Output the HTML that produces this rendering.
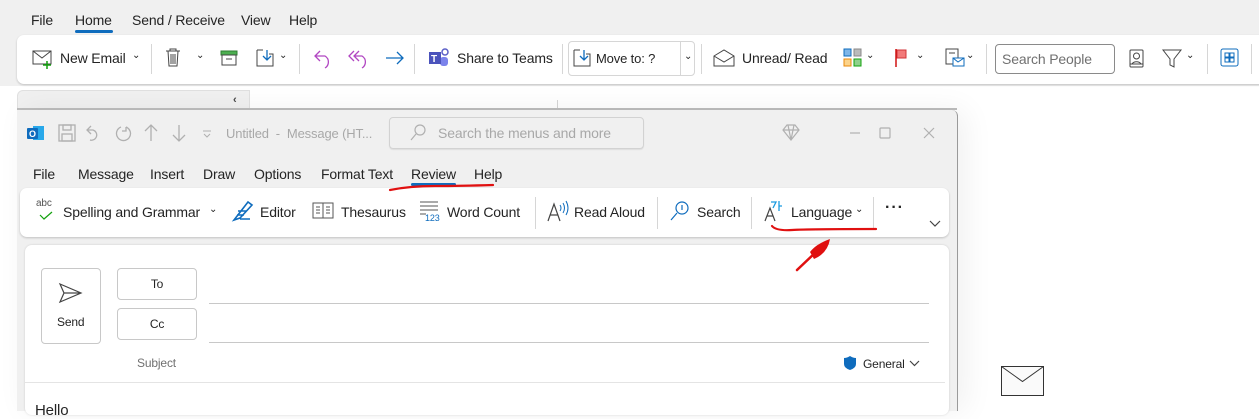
<!DOCTYPE html>
<html><head><meta charset="utf-8"><style>
*{margin:0;padding:0;box-sizing:border-box}
body{width:1259px;height:411px;overflow:hidden;background:#fff;font-family:"Liberation Sans",sans-serif;font-size:14px;color:#242424;position:relative;letter-spacing:-0.15px}
.a{position:absolute;white-space:nowrap}
.sep{position:absolute;width:1px;background:#d6d6d6}
svg{position:absolute;overflow:visible}
.g{color:#a8a8a8}
</style></head><body>
<div class="a" style="left:0;top:0;width:1259px;height:86px;background:#f0f0f0"></div>
<div class="a" style="left:31px;top:12px">File</div>
<div class="a" style="left:75px;top:12px;font-weight:500">Home</div>
<div class="a" style="left:75px;top:30px;width:38px;height:3px;background:#0f6cbd;border-radius:2px"></div>
<div class="a" style="left:132px;top:12px">Send / Receive</div>
<div class="a" style="left:241px;top:12px">View</div>
<div class="a" style="left:289px;top:12px">Help</div>
<div class="a" style="left:17px;top:35px;width:1250px;height:49px;background:#fff;border-radius:7px;box-shadow:0 1px 2px rgba(0,0,0,.2)"></div>
<svg style="left:32px;top:49px" width="22" height="20"><rect x="1" y="2" width="18" height="13" fill="none" stroke="#444"/><path d="M1 2l9 7 9-7" fill="none" stroke="#444"/><path d="M15 12v8M11 16h8" stroke="#13a10e" stroke-width="1.5"/></svg>
<div class="a" style="left:60px;top:50px">New Email</div>
<div class="a" style="left:132px;top:50px;font-size:10px">⌄</div>
<div class="sep" style="left:151px;top:44px;height:30px"></div>
<svg style="left:165px;top:48px" width="16" height="20"><path d="M1 3h14M5 3V1h6v2M3 3l1 15h8l1-15M6 6v10M8 6v10M10 6v10" fill="none" stroke="#444"/></svg>
<div class="a" style="left:196px;top:50px;font-size:10px">⌄</div>
<svg style="left:220px;top:50px" width="18" height="16"><rect x="1" y="1" width="16" height="4" fill="#4caf50" stroke="#2e7d32"/><rect x="2" y="5" width="14" height="10" fill="none" stroke="#444"/><path d="M6 9h6" stroke="#444"/></svg>
<svg style="left:256px;top:48px" width="20" height="20"><path d="M1 2h6M1 2v16h16V6h-4" fill="none" stroke="#444"/><path d="M11 2v10M7 8l4 4 4-4" fill="none" stroke="#0f6cbd" stroke-width="1.3"/></svg>
<div class="a" style="left:279px;top:50px;font-size:10px">⌄</div>
<div class="sep" style="left:299px;top:44px;height:30px"></div>
<svg style="left:314px;top:50px" width="20" height="18"><path d="M6 1L1 6l5 5M1 6h10a7 7 0 0 1 0 12" fill="none" stroke="#b146c2" stroke-width="1.3"/></svg>
<svg style="left:348px;top:50px" width="22" height="18"><path d="M6 1L1 6l5 5M11 1L6 6l5 5M6 6h8a7 7 0 0 1 0 12" fill="none" stroke="#b146c2" stroke-width="1.3"/></svg>
<svg style="left:385px;top:51px" width="20" height="14"><path d="M1 7h17M12 1l6 6-6 6" fill="none" stroke="#0f6cbd" stroke-width="1.3"/></svg>
<div class="sep" style="left:414px;top:44px;height:30px"></div>
<svg style="left:428px;top:48px" width="22" height="20"><circle cx="17" cy="4" r="3" fill="none" stroke="#5b5fc7" stroke-width="1.5"/><rect x="12" y="9" width="8" height="9" rx="3" fill="#7b83eb"/><rect x="1" y="4" width="12" height="12" fill="#4b53bc"/><text x="3" y="14" font-size="10" fill="#fff" font-family="Liberation Sans" font-weight="bold">T</text></svg>
<div class="a" style="left:457px;top:50px">Share to Teams</div>
<div class="sep" style="left:562px;top:44px;height:30px"></div>
<div class="a" style="left:568px;top:41px;width:127px;height:35px;border:1px solid #d6d6d6;border-radius:4px"></div>
<div class="sep" style="left:680px;top:42px;height:33px"></div>
<svg style="left:573px;top:48px" width="20" height="20"><path d="M1 2h6M1 2v16h16V6h-4" fill="none" stroke="#444"/><path d="M11 2v10M7 8l4 4 4-4" fill="none" stroke="#0f6cbd" stroke-width="1.3"/></svg>
<div class="a" style="left:596px;top:51px;font-size:13px">Move to: ?</div>
<div class="a" style="left:684px;top:51px;font-size:10px">⌄</div>
<div class="sep" style="left:701px;top:44px;height:30px"></div>
<svg style="left:713px;top:49px" width="22" height="18"><path d="M1 7l10-6 10 6v10H1zM1 7l10 6 10-6" fill="none" stroke="#444"/></svg>
<div class="a" style="left:742px;top:50px">Unread/ Read</div>
<svg style="left:843px;top:48px" width="20" height="20"><rect x="1" y="1" width="7" height="7" fill="#7fb6e8" stroke="#0f6cbd"/><rect x="11" y="1" width="7" height="7" fill="#bbb" stroke="#888"/><rect x="1" y="11" width="7" height="7" fill="#fcd38a" stroke="#e8890c"/><rect x="11" y="11" width="7" height="7" fill="#8fd18c" stroke="#13a10e"/></svg>
<div class="a" style="left:866px;top:50px;font-size:10px">⌄</div>
<svg style="left:895px;top:48px" width="14" height="20"><path d="M1 1v18" stroke="#c00" stroke-width="1.4"/><rect x="2" y="2" width="9" height="8" fill="#f27a7a" stroke="#d13438"/></svg>
<div class="a" style="left:916px;top:50px;font-size:10px">⌄</div>
<svg style="left:945px;top:48px" width="20" height="20"><rect x="1" y="1" width="12" height="15" fill="none" stroke="#444"/><path d="M4 5h6" stroke="#444"/><rect x="8" y="10" width="11" height="8" fill="#fff" stroke="#0f6cbd"/><path d="M8 10l5 4 6-4" fill="none" stroke="#0f6cbd"/></svg>
<div class="a" style="left:966px;top:50px;font-size:10px">⌄</div>
<div class="sep" style="left:986px;top:44px;height:30px"></div>
<div class="a" style="left:995px;top:44px;width:120px;height:30px;border:1px solid #8a8a8a;border-radius:4px"></div>
<div class="a" style="left:1002px;top:51px;color:#707070">Search People</div>
<svg style="left:1129px;top:49px" width="16" height="20"><rect x="1" y="1" width="13" height="17" rx="1" fill="none" stroke="#444"/><circle cx="7.5" cy="7" r="3" fill="none" stroke="#444"/><path d="M3 15a5 4 0 0 1 9 0M1 15h13" fill="none" stroke="#444"/></svg>
<svg style="left:1162px;top:49px" width="20" height="20"><path d="M1 1h18l-7 9v8l-4-2v-6z" fill="none" stroke="#444"/></svg>
<div class="a" style="left:1186px;top:50px;font-size:10px">⌄</div>
<div class="sep" style="left:1207px;top:44px;height:30px"></div>
<svg style="left:1220px;top:48px" width="20" height="20"><rect x="1" y="1" width="17" height="17" rx="2" fill="none" stroke="#0f6cbd"/><rect x="5" y="5" width="4" height="4" fill="none" stroke="#0f6cbd"/><rect x="10" y="5" width="4" height="4" fill="none" stroke="#0f6cbd"/><rect x="5" y="10" width="4" height="4" fill="none" stroke="#0f6cbd"/><rect x="10" y="10" width="4" height="4" fill="none" stroke="#0f6cbd"/></svg>
<div class="sep" style="left:1251px;top:44px;height:30px"></div>
<div class="a" style="left:17px;top:90px;width:233px;height:19px;background:#f0f0f0;border:1px solid #e0e0e0;border-bottom:none;border-radius:6px 0 0 0"></div>
<div class="a" style="left:233px;top:94px;font-size:11px;font-weight:bold;color:#444">‹</div>
<div class="a" style="left:17px;top:108px;width:940px;height:2px;background:#bdbdbd"></div>
<div class="sep" style="left:557px;top:100px;height:8px"></div>
<div class="a" style="left:17px;top:110px;width:941px;height:301px;background:#f0f0f0;border-right:1px solid #9a9a9a;border-radius:0 6px 0 0;box-shadow:8px 0 30px rgba(0,0,0,.06)"></div>
<svg style="left:27px;top:124px" width="18" height="18"><rect x="6" y="2" width="11" height="14" fill="#28a8ea"/><rect x="0" y="4" width="11" height="11" rx="1" fill="#0f6cbd"/><text x="2" y="13" font-size="9" font-weight="bold" fill="#fff" font-family="Liberation Sans">O</text></svg>
<svg style="left:58px;top:124px" width="120" height="18" fill="none" stroke="#b0b0b0" stroke-width="1.3"><rect x="1" y="1" width="16" height="16"/><rect x="5" y="1" width="8" height="5"/><rect x="4" y="10" width="10" height="7"/><path d="M33 2l-4 4 4 4M29 6h6a5 5 0 0 1-3 10"/><path d="M68 3a7 7 0 1 1-5 0M68 3v4h-4" /><path d="M93 17V1M87 7l6-6 6 6"/><path d="M121 1v16M115 11l6 6 6-6"/></svg>
<svg style="left:202px;top:130px" width="10" height="8" fill="none" stroke="#b0b0b0"><path d="M1 1h8M2 4l3 3 3-3"/></svg>
<div class="a g" style="left:226px;top:126px;font-size:13px">Untitled &nbsp;-&nbsp; Message (HT...</div>
<div class="a" style="left:389px;top:117px;width:255px;height:32px;border:1px solid #d2d2d2;border-radius:4px;box-shadow:0 1px 1px rgba(0,0,0,.08)"></div>
<svg style="left:410px;top:124px" width="16" height="18" fill="none" stroke="#b0b0b0" stroke-width="1.2"><circle cx="10" cy="6" r="5"/><path d="M6 10L1 16"/></svg>
<div class="a g" style="left:438px;top:125px">Search the menus and more</div>
<svg style="left:781px;top:124px" width="160" height="18" fill="none" stroke="#b0b0b0" stroke-width="1.2"><path d="M2 6l4-5h8l4 5-8 10zM2 6h16M7 1l3 15M13 1l-3 15"/><path d="M69 9h10"/><rect x="99" y="4" width="10" height="10" rx="1"/><path d="M143 4l10 10M153 4l-10 10"/></svg>
<div class="a" style="left:33px;top:166px">File</div>
<div class="a" style="left:78px;top:166px">Message</div>
<div class="a" style="left:150px;top:166px">Insert</div>
<div class="a" style="left:203px;top:166px">Draw</div>
<div class="a" style="left:254px;top:166px">Options</div>
<div class="a" style="left:321px;top:166px">Format Text</div>
<div class="a" style="left:411px;top:166px;font-weight:500">Review</div>
<div class="a" style="left:411px;top:183px;width:45px;height:3px;background:#0f6cbd;border-radius:2px"></div>
<div class="a" style="left:474px;top:166px">Help</div>
<div class="a" style="left:20px;top:188px;width:929px;height:49px;background:#fff;border-radius:7px;box-shadow:0 1px 2px rgba(0,0,0,.2)"></div>
<svg style="left:388px;top:180px" width="110" height="12"><path d="M2 10q20-4 45-4t58-1" fill="none" stroke="#e01010" stroke-width="2.2" stroke-linecap="round"/></svg>
<div class="a" style="left:36px;top:198px;font-size:10px;color:#555">abc</div>
<svg style="left:39px;top:211px" width="14" height="9"><path d="M1 4l4 4 8-7" fill="none" stroke="#13a10e" stroke-width="1.2"/></svg>
<div class="a" style="left:63px;top:204px">Spelling and Grammar</div>
<div class="a" style="left:209px;top:204px;font-size:10px">⌄</div>
<svg style="left:232px;top:200px" width="22" height="22"><path d="M2 20L16 2l4 3-12 13zM6 11h8M5 15h7M8 19h10" fill="none" stroke="#0f6cbd" stroke-width="1.6"/></svg>
<div class="a" style="left:260px;top:204px">Editor</div>
<svg style="left:312px;top:202px" width="22" height="18" fill="none" stroke="#555"><rect x="1" y="1" width="20" height="15"/><path d="M11 1v15M4 5h4M4 8h4M4 11h4M14 5h4M14 8h4M14 11h4"/></svg>
<div class="a" style="left:341px;top:204px">Thesaurus</div>
<svg style="left:419px;top:200px" width="22" height="22"><path d="M1 2h18M1 6h18M1 10h18M1 14h6" stroke="#555"/><text x="6" y="21" font-size="9" fill="#0f6cbd" font-family="Liberation Sans">123</text></svg>
<div class="a" style="left:447px;top:204px">Word Count</div>
<div class="sep" style="left:535px;top:197px;height:32px"></div>
<svg style="left:547px;top:200px" width="22" height="22" fill="none"><path d="M1 21L7 4l6 17M3 15h8" stroke="#444" stroke-width="1.2"/><path d="M13 5q2 3 0 6M16 3q3 5 0 10M19 1q4 7 0 14" stroke="#0f6cbd"/></svg>
<div class="a" style="left:574px;top:204px">Read Aloud</div>
<div class="sep" style="left:657px;top:197px;height:32px"></div>
<svg style="left:670px;top:201px" width="20" height="20" fill="none" stroke="#0f6cbd" stroke-width="1.2"><circle cx="12" cy="7" r="6"/><path d="M7 12L1 19M12 4v5"/></svg>
<div class="a" style="left:697px;top:204px">Search</div>
<div class="sep" style="left:751px;top:197px;height:32px"></div>
<svg style="left:764px;top:200px" width="22" height="22" fill="none"><path d="M1 21L6 8l5 13M3 16h6" stroke="#444" stroke-width="1.2"/><path d="M7 2h5l-3 6M15 1v10M15 6h3" stroke="#1a9be0" stroke-width="1.3"/></svg>
<div class="a" style="left:791px;top:204px">Language</div>
<div class="a" style="left:855px;top:204px;font-size:10px">⌄</div>
<div class="sep" style="left:873px;top:197px;height:32px"></div>
<div class="a" style="left:885px;top:199px;font-size:16px;font-weight:bold;letter-spacing:1px">···</div>
<svg style="left:929px;top:220px" width="12" height="8"><path d="M1 1l5 5 5-5" fill="none" stroke="#444" stroke-width="1.2"/></svg>
<svg style="left:770px;top:222px" width="110" height="10"><path d="M2 4q4 5 20 4t84-1" fill="none" stroke="#e01010" stroke-width="2.2" stroke-linecap="round"/></svg>
<div class="a" style="left:25px;top:245px;width:924px;height:170px;background:#fff;border-radius:7px;box-shadow:0 0 2px rgba(0,0,0,.15)"></div>
<svg style="left:794px;top:238px" width="40" height="36"><path d="M3 32L22 14" stroke="#e01010" stroke-width="2.5" stroke-linecap="round"/><path d="M16 14q6-8 20-13q-2 12-12 18l-4 2z" fill="#e01010"/></svg>
<div class="a" style="left:41px;top:268px;width:60px;height:76px;border:1px solid #c8c8c8;border-radius:4px"></div>
<svg style="left:59px;top:283px" width="24" height="20"><path d="M1 1l21 9L1 19l4-9zM5 10h17" fill="none" stroke="#444" stroke-width="1.2"/></svg>
<div class="a" style="left:57px;top:315px;font-size:12px">Send</div>
<div class="a" style="left:117px;top:268px;width:80px;height:32px;border:1px solid #c8c8c8;border-radius:4px;text-align:center;line-height:30px;font-size:12px">To</div>
<div class="a" style="left:117px;top:308px;width:80px;height:32px;border:1px solid #c8c8c8;border-radius:4px;text-align:center;line-height:30px;font-size:12px">Cc</div>
<div class="a" style="left:209px;top:303px;width:720px;height:1px;background:#c8c8c8"></div>
<div class="a" style="left:209px;top:342px;width:720px;height:1px;background:#c8c8c8"></div>
<div class="a" style="left:137px;top:356px;font-size:12px;color:#707070">Subject</div>
<svg style="left:843px;top:355px" width="14" height="16"><path d="M7 1q3 2 6 2v6q0 4-6 6q-6-2-6-6V3q3 0 6-2z" fill="#0f6cbd"/></svg>
<div class="a" style="left:863px;top:357px;font-size:12px">General</div>
<svg style="left:909px;top:360px" width="11" height="7"><path d="M1 1l4.5 4.5L10 1" fill="none" stroke="#444" stroke-width="1.2"/></svg>
<div class="a" style="left:25px;top:382px;width:920px;height:1px;background:#e4e4e4"></div>
<div class="a" style="left:35px;top:402px;font-size:15px">Hello</div>
<svg style="left:1001px;top:366px" width="44" height="30"><rect x="0.5" y="0.5" width="42" height="29" fill="#fafafa" stroke="#333"/><path d="M0.5 0.5l21 15 21-15" fill="none" stroke="#333"/></svg>
</body></html>
